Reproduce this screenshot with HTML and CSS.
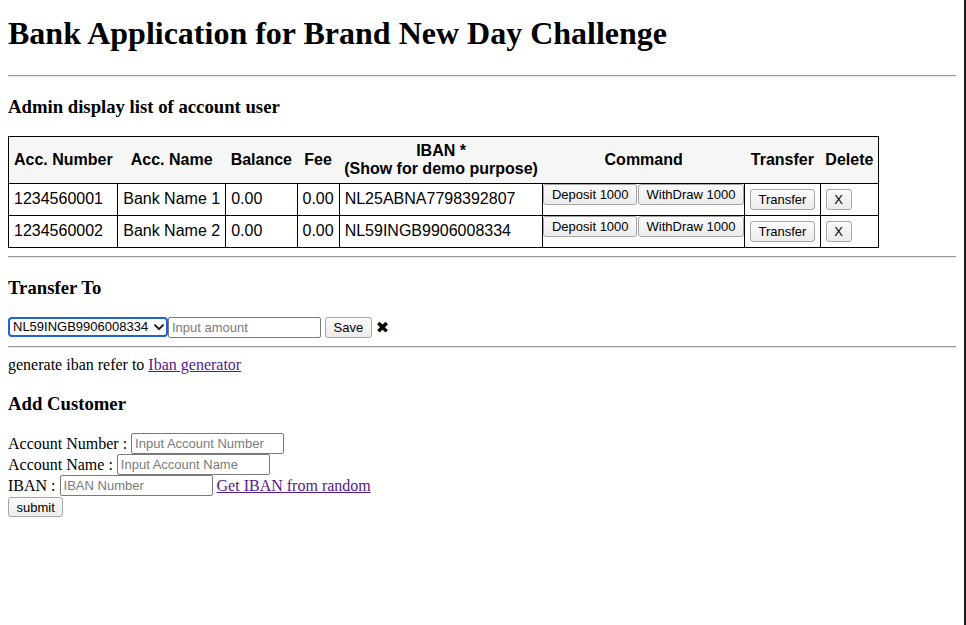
FILE: index.html
```html
<!DOCTYPE html>
<html lang="en">
<head>
<meta charset="utf-8">
<title>Bank Application for Brand New Day Challenge</title>
<link rel="stylesheet" href="styles.css">
</head>
<body>
<h1 class="title">Bank Application for Brand New Day Challenge</h1>
<hr class="rule">
<h3 class="section-title">Admin display list of account user</h3>
<table class="accounts">
<thead>
<tr>
<th>Acc. Number</th><th>Acc. Name</th><th>Balance</th><th>Fee</th><th>IBAN *<br>(Show for demo purpose)</th><th>Command</th><th>Transfer</th><th>Delete</th>
</tr>
</thead>
<tbody>
<tr>
<td>1234560001</td><td>Bank Name 1</td><td>0.00</td><td>0.00</td><td>NL25ABNA7798392807</td>
<td class="command"><button class="btn btn-first" type="button">Deposit 1000</button><button class="btn" type="button">WithDraw 1000</button></td>
<td><button class="btn" type="button">Transfer</button></td>
<td><button class="btn" type="button">X</button></td>
</tr>
<tr>
<td>1234560002</td><td>Bank Name 2</td><td>0.00</td><td>0.00</td><td>NL59INGB9906008334</td>
<td class="command"><button class="btn btn-first" type="button">Deposit 1000</button><button class="btn" type="button">WithDraw 1000</button></td>
<td><button class="btn" type="button">Transfer</button></td>
<td><button class="btn" type="button">X</button></td>
</tr>
</tbody>
</table>
<hr class="rule">
<h3 class="section-title">Transfer To</h3>
<div class="transfer-row"><span class="select-wrap"><select class="select"><option>NL59INGB9906008334</option><option>NL25ABNA7798392807</option></select><svg class="chevron" width="10" height="7" viewBox="0 0 10 7"><path d="M1 1.2 L5 5.2 L9 1.2" fill="none" stroke="#111" stroke-width="1.9" stroke-linecap="round" stroke-linejoin="round"/></svg></span><input class="field" type="text" placeholder="Input amount"> <button class="btn" type="button">Save</button> <span class="close">✖</span></div>
<hr class="rule">
<div class="note">generate iban refer to <a class="link" href="#">Iban generator</a></div>
<h3 class="section-title">Add Customer</h3>
<form class="customer-form">
<div class="form-row">Account Number : <input class="field" type="text" placeholder="Input Account Number"></div>
<div class="form-row">Account Name : <input class="field" type="text" placeholder="Input Account Name"></div>
<div class="form-row">IBAN : <input class="field" type="text" placeholder="IBAN Number"> <a class="link" href="#">Get IBAN from random</a></div>
<div class="form-row submit-row"><button class="btn btn-submit" type="button">submit</button></div>
</form>
</body>
</html>
```

FILE: styles.css
```css
html {
  border-right: 2px solid #1c1c1c;
  min-height: 100vh;
  box-sizing: border-box;
  background: #fff;
}

body {
  margin: 0 8px 8px;
  font-family: "Liberation Serif", "Times New Roman", serif;
  font-size: 16px;
  color: #000;
}

.title {
  font-size: 32px;
  line-height: 24px;
  font-weight: bold;
  margin: 21.44px 0 29.44px;
}

.rule {
  margin: 8px 0;
  height: 0;
  border: 0;
  border-top: 1px solid #9a9a9a;
  border-bottom: 1px solid #e6e6e6;
}

.section-title {
  font-size: 18.72px;
  line-height: 21.5px;
  font-weight: bold;
  margin: 18.72px 0;
}

.accounts {
  border-collapse: collapse;
  border: 1px solid #000;
  font-family: "Liberation Sans", Arial, sans-serif;
  font-size: 16px;
  margin-top: 0;
}

.accounts th {
  background: #f6f6f6;
  padding: 5px;
  font-weight: bold;
  text-align: center;
  vertical-align: middle;
  line-height: 18px;
}

.accounts td {
  border: 1px solid #000;
  padding: 5px;
  line-height: 18.4px;
  vertical-align: middle;
}

.accounts td.command {
  padding: 0;
  vertical-align: top;
  white-space: nowrap;
}

.btn {
  font-family: "Liberation Sans", Arial, sans-serif;
  font-size: 13px;
  line-height: 15px;
  height: 21px;
  box-sizing: border-box;
  padding: 2px 7.5px;
  margin: 0;
  border: 1px solid #a5a5a5;
  border-radius: 3px;
  background: linear-gradient(#fbfbfb, #ececec);
  color: #000;
  vertical-align: top;
}

.btn-first {
  margin-right: 1px;
}

.btn-submit {
  height: 20px;
  padding: 1px 7.5px;
}

.transfer-row {
  line-height: 21px;
  height: 21px;
}

.select-wrap {
  position: relative;
  display: inline-block;
  vertical-align: top;
  height: 20px;
}

.select {
  appearance: none;
  -webkit-appearance: none;
  width: 160px;
  height: 20px;
  box-sizing: border-box;
  margin: 0;
  padding: 0 0 0 3px;
  border: 2px solid #1f62d4;
  border-radius: 4px;
  background: #fff;
  color: #000;
  font-family: "Liberation Sans", Arial, sans-serif;
  font-size: 13px;
  line-height: 16px;
  vertical-align: top;
}

.chevron {
  position: absolute;
  right: 4px;
  top: 7px;
  pointer-events: none;
}

.field {
  width: 153px;
  height: 21px;
  box-sizing: border-box;
  margin: 0;
  padding: 1px 3px;
  border: 1px solid #7a7a7a;
  border-radius: 2px;
  font-family: "Liberation Sans", Arial, sans-serif;
  font-size: 13px;
  line-height: normal;
  color: #000;
  background: #fff;
  vertical-align: top;
}

.field::placeholder {
  color: #7b7b7b;
}

.close {
  font-family: "DejaVu Sans", sans-serif;
  font-size: 16px;
  line-height: 21px;
  vertical-align: top;
}

.note {
  line-height: 18.4px;
}

.link {
  color: #551a8b;
  text-decoration: underline;
}

.customer-form {
  margin: 0;
}

.form-row {
  line-height: 21px;
  height: 21px;
}

.submit-row {
  padding-top: 1px;
}
```
